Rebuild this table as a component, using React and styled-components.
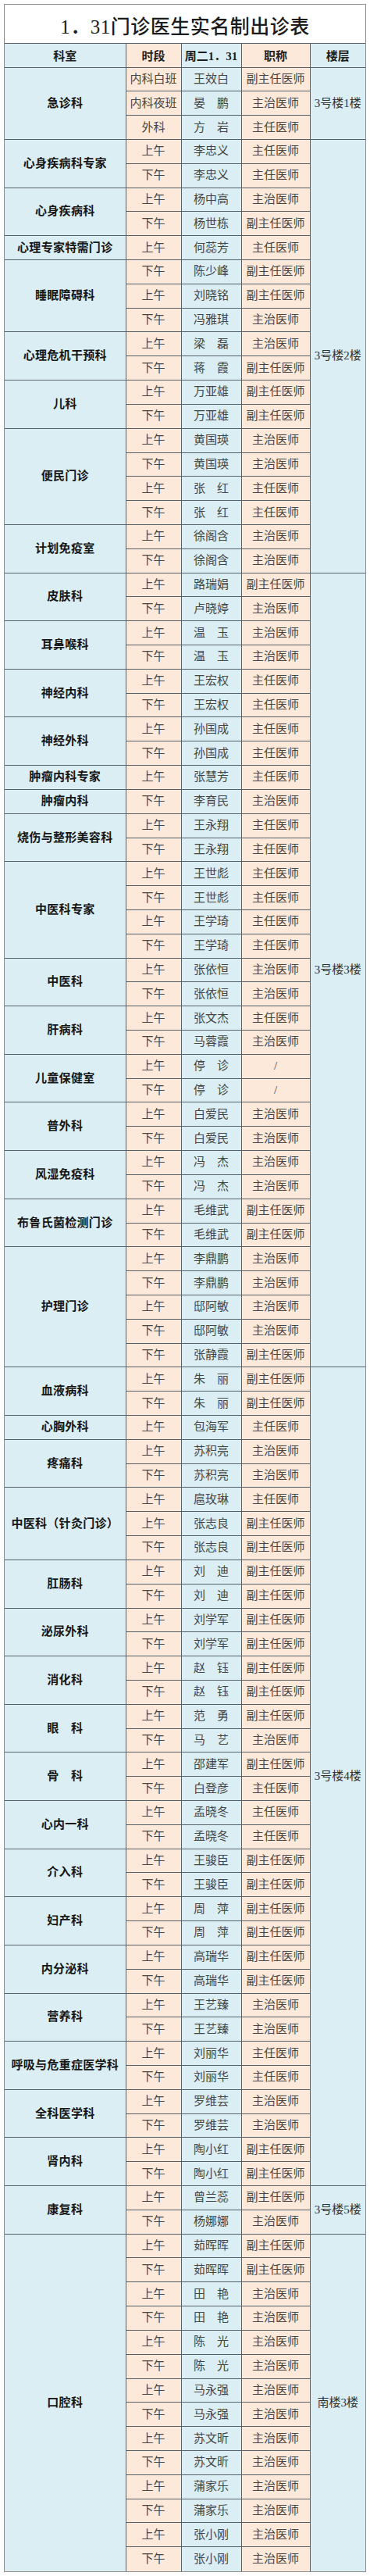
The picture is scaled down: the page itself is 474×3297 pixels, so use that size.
import React from 'react';
import styled, { createGlobalStyle } from 'styled-components';

const GlobalStyle = createGlobalStyle`
  body {
    margin: 0;
    background: #fff;
    font-family: "Liberation Serif", "Noto Sans CJK SC", serif;
  }
`;

const BLUE = '#daeef3';
const PEACH = '#fde9d9';
const LINE = '#56616a';

const Page = styled.div`
  padding: 5px;
`;

const Frame = styled.div`
  width: 464px;
  box-sizing: border-box;
  border: 1px solid #8d8d8d;
`;

const Table = styled.table`
  width: 462px;
  table-layout: fixed;
  border-collapse: collapse;
  border-style: hidden;
`;

const Col = styled.col`
  width: ${p => p.$w}px;
`;

const TitleRow = styled.tr`
  height: 49px;
`;

const Title = styled.th`
  background: #fff;
  border: 1px solid ${LINE};
  padding: 4px 0 0;
  font-size: 25px;
  font-weight: 500;
  color: #1c1c1c;
  letter-spacing: 0.5px;
  text-align: center;
`;

const HeadRow = styled.tr`
  height: 31px;
`;

const HeadCell = styled.th`
  background: ${p => (p.$peach ? PEACH : BLUE)};
  border: 1px solid ${LINE};
  padding: 0;
  font-size: 15px;
  font-weight: 700;
  color: #1e1e1e;
  text-align: center;
  white-space: nowrap;
`;

const Row = styled.tr`
  height: 30.82px;
`;

const Cell = styled.td`
  background: ${p => (p.$peach ? PEACH : BLUE)};
  border: 1px solid ${LINE};
  padding: 0;
  font-size: 15px;
  line-height: 1;
  color: #454545;
  text-align: center;
  vertical-align: middle;
  white-space: nowrap;
`;

const DeptCell = styled(Cell)`
  font-weight: 700;
  color: #161616;
  letter-spacing: 0.3px;
`;

const FloorCell = styled(Cell)`
  color: #333;
`;

const floors = [
  {
    floor: '3号楼1楼',
    depts: [
      ['急诊科', [['内科白班', '王效白', '副主任医师'], ['内科夜班', '晏　鹏', '主治医师'], ['外科', '方　岩', '主任医师']]],
    ],
  },
  {
    floor: '3号楼2楼',
    depts: [
      ['心身疾病科专家', [['上午', '李忠义', '主任医师'], ['下午', '李忠义', '主任医师']]],
      ['心身疾病科', [['上午', '杨中高', '主治医师'], ['下午', '杨世栋', '副主任医师']]],
      ['心理专家特需门诊', [['上午', '何蕊芳', '主任医师']]],
      ['睡眠障碍科', [['下午', '陈少峰', '副主任医师'], ['上午', '刘晓铭', '副主任医师'], ['下午', '冯雅琪', '主治医师']]],
      ['心理危机干预科', [['上午', '梁　磊', '主治医师'], ['下午', '蒋　霞', '副主任医师']]],
      ['儿科', [['上午', '万亚雄', '副主任医师'], ['下午', '万亚雄', '副主任医师']]],
      ['便民门诊', [['上午', '黄国瑛', '主治医师'], ['下午', '黄国瑛', '主治医师'], ['上午', '张　红', '主任医师'], ['下午', '张　红', '主任医师']]],
      ['计划免疫室', [['上午', '徐阁含', '主治医师'], ['下午', '徐阁含', '主治医师']]],
    ],
  },
  {
    floor: '3号楼3楼',
    depts: [
      ['皮肤科', [['上午', '路瑞娟', '副主任医师'], ['下午', '卢晓婷', '主治医师']]],
      ['耳鼻喉科', [['上午', '温　玉', '主治医师'], ['下午', '温　玉', '主治医师']]],
      ['神经内科', [['上午', '王宏权', '主任医师'], ['下午', '王宏权', '主任医师']]],
      ['神经外科', [['上午', '孙国成', '主任医师'], ['下午', '孙国成', '主任医师']]],
      ['肿瘤内科专家', [['上午', '张慧芳', '主任医师']]],
      ['肿瘤内科', [['下午', '李育民', '主治医师']]],
      ['烧伤与整形美容科', [['上午', '王永翔', '主任医师'], ['下午', '王永翔', '主任医师']]],
      ['中医科专家', [['上午', '王世彪', '主任医师'], ['下午', '王世彪', '主任医师'], ['上午', '王学琦', '主任医师'], ['下午', '王学琦', '主任医师']]],
      ['中医科', [['上午', '张依恒', '主治医师'], ['下午', '张依恒', '主治医师']]],
      ['肝病科', [['上午', '张文杰', '主任医师'], ['下午', '马蓉霞', '主治医师']]],
      ['儿童保健室', [['上午', '停　诊', '/'], ['下午', '停　诊', '/']]],
      ['普外科', [['上午', '白爱民', '主治医师'], ['下午', '白爱民', '主治医师']]],
      ['风湿免疫科', [['上午', '冯　杰', '主治医师'], ['下午', '冯　杰', '主治医师']]],
      ['布鲁氏菌检测门诊', [['上午', '毛维武', '副主任医师'], ['下午', '毛维武', '副主任医师']]],
      ['护理门诊', [['上午', '李鼎鹏', '主治医师'], ['下午', '李鼎鹏', '主治医师'], ['上午', '邸阿敏', '主治医师'], ['下午', '邸阿敏', '主治医师'], ['下午', '张静霞', '副主任医师']]],
    ],
  },
  {
    floor: '3号楼4楼',
    depts: [
      ['血液病科', [['上午', '朱　丽', '副主任医师'], ['下午', '朱　丽', '副主任医师']]],
      ['心胸外科', [['上午', '包海军', '主任医师']]],
      ['疼痛科', [['上午', '苏积亮', '主治医师'], ['下午', '苏积亮', '主治医师']]],
      ['中医科（针灸门诊）', [['上午', '扈玫琳', '主任医师'], ['上午', '张志良', '副主任医师'], ['下午', '张志良', '副主任医师']]],
      ['肛肠科', [['上午', '刘　迪', '副主任医师'], ['下午', '刘　迪', '副主任医师']]],
      ['泌尿外科', [['上午', '刘学军', '副主任医师'], ['下午', '刘学军', '副主任医师']]],
      ['消化科', [['上午', '赵　钰', '副主任医师'], ['下午', '赵　钰', '副主任医师']]],
      ['眼　科', [['上午', '范　勇', '副主任医师'], ['下午', '马　艺', '主治医师']]],
      ['骨　科', [['上午', '邵建军', '副主任医师'], ['下午', '白登彦', '主任医师']]],
      ['心内一科', [['上午', '孟晓冬', '主任医师'], ['下午', '孟晓冬', '主任医师']]],
      ['介入科', [['上午', '王骏臣', '副主任医师'], ['下午', '王骏臣', '副主任医师']]],
      ['妇产科', [['上午', '周　萍', '副主任医师'], ['下午', '周　萍', '副主任医师']]],
      ['内分泌科', [['上午', '高瑞华', '副主任医师'], ['下午', '高瑞华', '副主任医师']]],
      ['营养科', [['上午', '王艺臻', '主治医师'], ['下午', '王艺臻', '主治医师']]],
      ['呼吸与危重症医学科', [['上午', '刘丽华', '主任医师'], ['下午', '刘丽华', '主任医师']]],
      ['全科医学科', [['上午', '罗维芸', '主治医师'], ['下午', '罗维芸', '主治医师']]],
      ['肾内科', [['上午', '陶小红', '副主任医师'], ['下午', '陶小红', '副主任医师']]],
    ],
  },
  {
    floor: '3号楼5楼',
    depts: [
      ['康复科', [['上午', '曾兰蕊', '副主任医师'], ['下午', '杨娜娜', '主治医师']]],
    ],
  },
  {
    floor: '南楼3楼',
    depts: [
      ['口腔科', [
        ['上午', '茹晖晖', '副主任医师'], ['下午', '茹晖晖', '副主任医师'],
        ['上午', '田　艳', '主治医师'], ['下午', '田　艳', '主治医师'],
        ['上午', '陈　光', '主治医师'], ['下午', '陈　光', '主治医师'],
        ['上午', '马永强', '主治医师'], ['下午', '马永强', '主治医师'],
        ['上午', '苏文昕', '主治医师'], ['下午', '苏文昕', '主治医师'],
        ['上午', '蒲家乐', '主治医师'], ['下午', '蒲家乐', '主治医师'],
        ['上午', '张小刚', '主治医师'], ['下午', '张小刚', '主治医师'],
      ]],
    ],
  },
];

function FloorRows({ floor, depts }) {
  const total = depts.reduce((n, [, rows]) => n + rows.length, 0);
  const out = [];
  depts.forEach(([dept, rows], di) => {
    rows.forEach(([time, name, rank], ri) => {
      out.push(
        <Row key={dept + ri}>
          {ri === 0 && <DeptCell rowSpan={rows.length}>{dept}</DeptCell>}
          <Cell $peach>{time}</Cell>
          <Cell>{name}</Cell>
          <Cell $peach>{rank}</Cell>
          {di === 0 && ri === 0 && <FloorCell rowSpan={total}>{floor}</FloorCell>}
        </Row>
      );
    });
  });
  return out;
}

export default function App() {
  return (
    <Page>
      <GlobalStyle />
      <Frame>
        <Table>
          <colgroup>
            <Col $w={155} />
            <Col $w={71} />
            <Col $w={77} />
            <Col $w={88} />
            <Col $w={71} />
          </colgroup>
          <thead>
            <TitleRow>
              <Title colSpan={5}>1．31门诊医生实名制出诊表</Title>
            </TitleRow>
            <HeadRow>
              <HeadCell>科室</HeadCell>
              <HeadCell $peach>时段</HeadCell>
              <HeadCell>周二1．31</HeadCell>
              <HeadCell $peach>职称</HeadCell>
              <HeadCell>楼层</HeadCell>
            </HeadRow>
          </thead>
          <tbody>
            {floors.map(f => (
              <FloorRows key={f.floor} floor={f.floor} depts={f.depts} />
            ))}
          </tbody>
        </Table>
      </Frame>
    </Page>
  );
}
